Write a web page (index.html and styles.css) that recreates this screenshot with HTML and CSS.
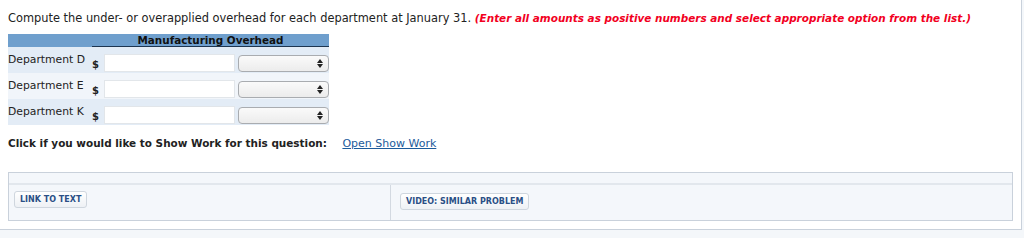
FILE: index.html
```html
<!DOCTYPE html>
<html lang="en">
<head>
    <meta charset="UTF-8">
    <title>Manufacturing Overhead</title>
    <link rel="stylesheet" href="styles.css">
</head>
<body>
    <div class="page">
        <p class="prompt">Compute the under- or overapplied overhead for each department at January 31. <em class="note">(Enter all amounts as positive numbers and select appropriate option from the list.)</em></p>

        <table class="ovh">
            <tr class="head">
                <th class="blank"></th>
                <th colspan="3"><span>Manufacturing Overhead</span></th>
            </tr>
            <tr class="row alt">
                <td class="label">Department D</td>
                <td class="cur">$</td>
                <td><input type="text" class="amt"></td>
                <td><div class="pick"><span class="arrows"></span></div></td>
            </tr>
            <tr class="row">
                <td class="label">Department E</td>
                <td class="cur">$</td>
                <td><input type="text" class="amt"></td>
                <td><div class="pick"><span class="arrows"></span></div></td>
            </tr>
            <tr class="row alt">
                <td class="label">Department K</td>
                <td class="cur">$</td>
                <td><input type="text" class="amt"></td>
                <td><div class="pick"><span class="arrows"></span></div></td>
            </tr>
        </table>

        <p class="showwork"><b>Click if you would like to Show Work for this question:</b> <a href="#">Open Show Work</a></p>

        <div class="tools">
            <div class="tools-top"></div>
            <div class="tools-row">
                <div class="cell left"><button class="btn">LINK TO TEXT</button></div>
                <div class="cell right"><button class="btn">VIDEO: SIMILAR PROBLEM</button></div>
            </div>
        </div>
    </div>
</body>
</html>
```

FILE: styles.css
```css
body {
    margin: 0;
    background: #f4f7fa;
    font-family: "DejaVu Sans", Verdana, sans-serif;
    font-size: 11px;
    color: #222;
}
.page {
    width: 1013px;
    height: 221px;
    padding: 8px 0 0 8px;
    background: #fff;
    border-right: 1px solid #c9d1db;
    border-bottom: 1px solid #c9d1db;
}
.prompt {
    margin: 0;
    padding-top: 3px;
    line-height: 14px;
    font-size: 11.4px;
}
.note {
    color: #f2001e;
    font-weight: bold;
    font-size: 10.45px;
}
.ovh {
    margin-top: 9px;
    border-collapse: collapse;
    width: 321px;
}
.ovh td, .ovh th {
    padding: 0;
    vertical-align: top;
}
.head th {
    background: #6f9fcd;
    height: 13px;
    font-size: 10.4px;
    line-height: 12px;
    color: #111;
}
.head th.blank {
    width: 84px;
}
.head th span {
    display: block;
    border-bottom: 1px solid #1d3550;
}
.row {
    background: #f1f5fa;
    height: 26px;
}
.row.alt {
    background: #e3ecf6;
}
.label {
    padding-top: 6px !important;
    line-height: 14px;
    font-size: 10.8px;
}
.cur {
    width: 12px;
    padding-top: 12px !important;
    font-size: 10px;
    font-weight: bold;
    line-height: 12px;
}
.amt {
    display: block;
    box-sizing: border-box;
    width: 131px;
    height: 18px;
    margin: 7px 0 0;
    border: 1px solid #e2e6ea;
    background: #fff;
    padding: 0;
}
.pick {
    position: relative;
    box-sizing: border-box;
    width: 91px;
    height: 17px;
    margin: 8px 0 0 2px;
    border: 1px solid #a9acb0;
    border-radius: 4px;
    background: linear-gradient(#fafafa, #ececec);
}
.arrows::before,
.arrows::after {
    content: "";
    position: absolute;
    right: 5px;
    border-left: 3px solid transparent;
    border-right: 3px solid transparent;
}
.arrows::before {
    top: 3px;
    border-bottom: 4px solid #222;
}
.arrows::after {
    top: 8px;
    border-top: 4px solid #222;
}
.showwork {
    margin: 11px 0 0;
    line-height: 14px;
}
.showwork b {
    font-size: 10.45px;
}
.showwork a {
    margin-left: 12px;
    color: #1c5b9b;
}
.tools {
    margin-top: 21px;
    width: 1003px;
    border: 1px solid #c9d1db;
    background: #f4f7fb;
}
.tools-top {
    height: 10px;
    border-bottom: 2px solid #e2e7ed;
}
.tools-row {
    display: flex;
    height: 35px;
}
.cell {
    padding: 6px 0 0 5px;
}
.cell.left {
    width: 376px;
    border-right: 1px solid #d3d9e1;
}
.cell.right {
    padding: 8px 0 0 9px;
}
.btn {
    font-family: "DejaVu Sans", Verdana, sans-serif;
    font-size: 8px;
    font-weight: bold;
    color: #2a4f86;
    height: 17px;
    padding: 0 5px;
    border: 1px solid #cfd6de;
    border-radius: 3px;
    background: linear-gradient(#ffffff, #eef1f5);
}
```
